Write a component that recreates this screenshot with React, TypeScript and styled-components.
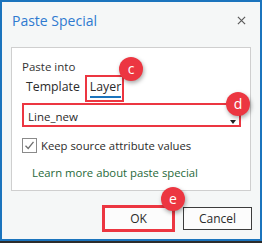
import styled, { createGlobalStyle } from 'styled-components';

const Global = createGlobalStyle`
  html, body { margin: 0; padding: 0; background: #ffffff; }
  body { font-family: "Open Sans", "Noto Sans", "Liberation Sans", sans-serif; }
`;

const RED = '#ec3641';

const Frame = styled.div`
  position: relative;
  width: 262px;
  height: 243px;
  box-sizing: border-box;
  border-bottom: 2px solid #2c2c2c;
`;

const Dialog = styled.div`
  height: 241px;
  box-sizing: border-box;
  border: 2px solid #1b74bd;
  background: #f5f7f7;
  display: flex;
  flex-direction: column;
`;

const Header = styled.div`
  height: 45px;
  display: flex;
  align-items: center;
  justify-content: space-between;
  padding: 0 10px 8px 10px;
  box-sizing: border-box;
`;

const Title = styled.div`
  font-size: 14px;
  color: #2f7ad0;
`;

const Close = styled.svg`
  width: 9px;
  height: 9px;
  margin-right: 4px;
`;

const Panel = styled.div`
  margin: 0 9px;
  height: 144px;
  box-sizing: border-box;
  background: #ffffff;
  border: 1px solid #cfcfcf;
  padding: 11px 10px 0 10px;
  display: flex;
  flex-direction: column;
`;

const Label = styled.div`
  font-size: 11.5px;
  line-height: 16px;
  color: #333;
`;

const Tabs = styled.div`
  display: flex;
  gap: 10px;
  padding-left: 4px;
  margin-top: 4px;
  height: 24px;
  align-items: flex-start;
`;

const Tab = styled.div<{ $active?: boolean }>`
  font-size: 12.3px;
  line-height: 16px;
  color: #2b2b2b;
  padding-bottom: 1px;
  border-bottom: 2px solid ${p => (p.$active ? '#1b74bd' : 'transparent')};
`;

const Select = styled.div`
  margin-top: 2px;
  height: 22px;
  box-sizing: border-box;
  display: flex;
  align-items: center;
  justify-content: space-between;
  padding: 0 4px 0 6px;
  font-size: 11.5px;
  color: #2b2b2b;
`;

const Arrow = styled.span`
  align-self: flex-end;
  margin-bottom: 3px;
  width: 0;
  height: 0;
  border-left: 3px solid transparent;
  border-right: 3px solid transparent;
  border-top: 4px solid #222;
`;

const CheckRow = styled.label`
  margin-top: 10px;
  display: flex;
  align-items: center;
  gap: 4px;
  font-size: 11.3px;
  line-height: 17px;
  color: #2b2b2b;
`;

const Box = styled.span`
  width: 13px;
  height: 13px;
  border: 1px solid #8a8a8a;
  display: flex;
  align-items: center;
  justify-content: center;
`;

const Link = styled.div`
  margin-top: 11px;
  padding-left: 10px;
  font-size: 11.3px;
  line-height: 16px;
  color: #27693a;
`;

const Footer = styled.div`
  flex: 1;
  display: flex;
  justify-content: flex-end;
  align-items: center;
  gap: 10px;
  padding: 6px 8px 0 0;
`;

const Button = styled.div<{ $marked?: boolean }>`
  width: 69px;
  height: 23px;
  box-sizing: border-box;
  border: 1px solid ${p => (p.$marked ? RED : '#3c3c3c')};
  outline: ${p => (p.$marked ? `2px solid ${RED}` : 'none')};
  background: #fcfcfc;
  display: flex;
  align-items: center;
  justify-content: center;
  font-size: 12px;
  color: #2b2b2b;
`;

const Mark = styled.div<{ $top: number; $left: number; $w: number; $h: number }>`
  position: absolute;
  top: ${p => p.$top}px;
  left: ${p => p.$left}px;
  width: ${p => p.$w}px;
  height: ${p => p.$h}px;
  box-sizing: border-box;
  border: 2px solid ${RED};
`;

const Badge = styled.div<{ $x: number; $y: number }>`
  position: absolute;
  left: ${p => p.$x - 12}px;
  top: ${p => p.$y - 12}px;
  width: 24px;
  height: 24px;
  border-radius: 50%;
  background: ${RED};
  color: #fff;
  font-size: 14px;
  line-height: 23px;
  text-align: center;
  box-shadow: 1px 2px 4px rgba(0, 0, 0, 0.35);
`;

export default function App() {
  return (
    <>
      <Global />
      <Frame>
        <Dialog>
          <Header>
            <Title>Paste Special</Title>
            <Close viewBox="0 0 10 10">
              <path d="M1 1 L9 9 M9 1 L1 9" stroke="#5a5a5a" strokeWidth="1.3" />
            </Close>
          </Header>
          <Panel>
            <Label>Paste into</Label>
            <Tabs>
              <Tab>Template</Tab>
              <Tab $active>Layer</Tab>
            </Tabs>
            <Select>
              <span>Line_new</span>
              <Arrow />
            </Select>
            <CheckRow>
              <Box>
                <svg width="11" height="11" viewBox="0 0 11 11">
                  <path d="M1.5 5.8 L4.2 8.5 L9.5 1.8" fill="none" stroke="#6f6f6f" strokeWidth="1.3" />
                </svg>
              </Box>
              Keep source attribute values
            </CheckRow>
            <Link>Learn more about paste special</Link>
          </Panel>
          <Footer>
            <Button $marked>OK</Button>
            <Button>Cancel</Button>
          </Footer>
        </Dialog>
        <Mark $top={75} $left={85} $w={39} $h={27} />
        <Mark $top={103} $left={22} $w={219} $h={24} />
        <Badge $x={131} $y={69}>c</Badge>
        <Badge $x={238} $y={104}>d</Badge>
        <Badge $x={173} $y={199}>e</Badge>
      </Frame>
    </>
  );
}
